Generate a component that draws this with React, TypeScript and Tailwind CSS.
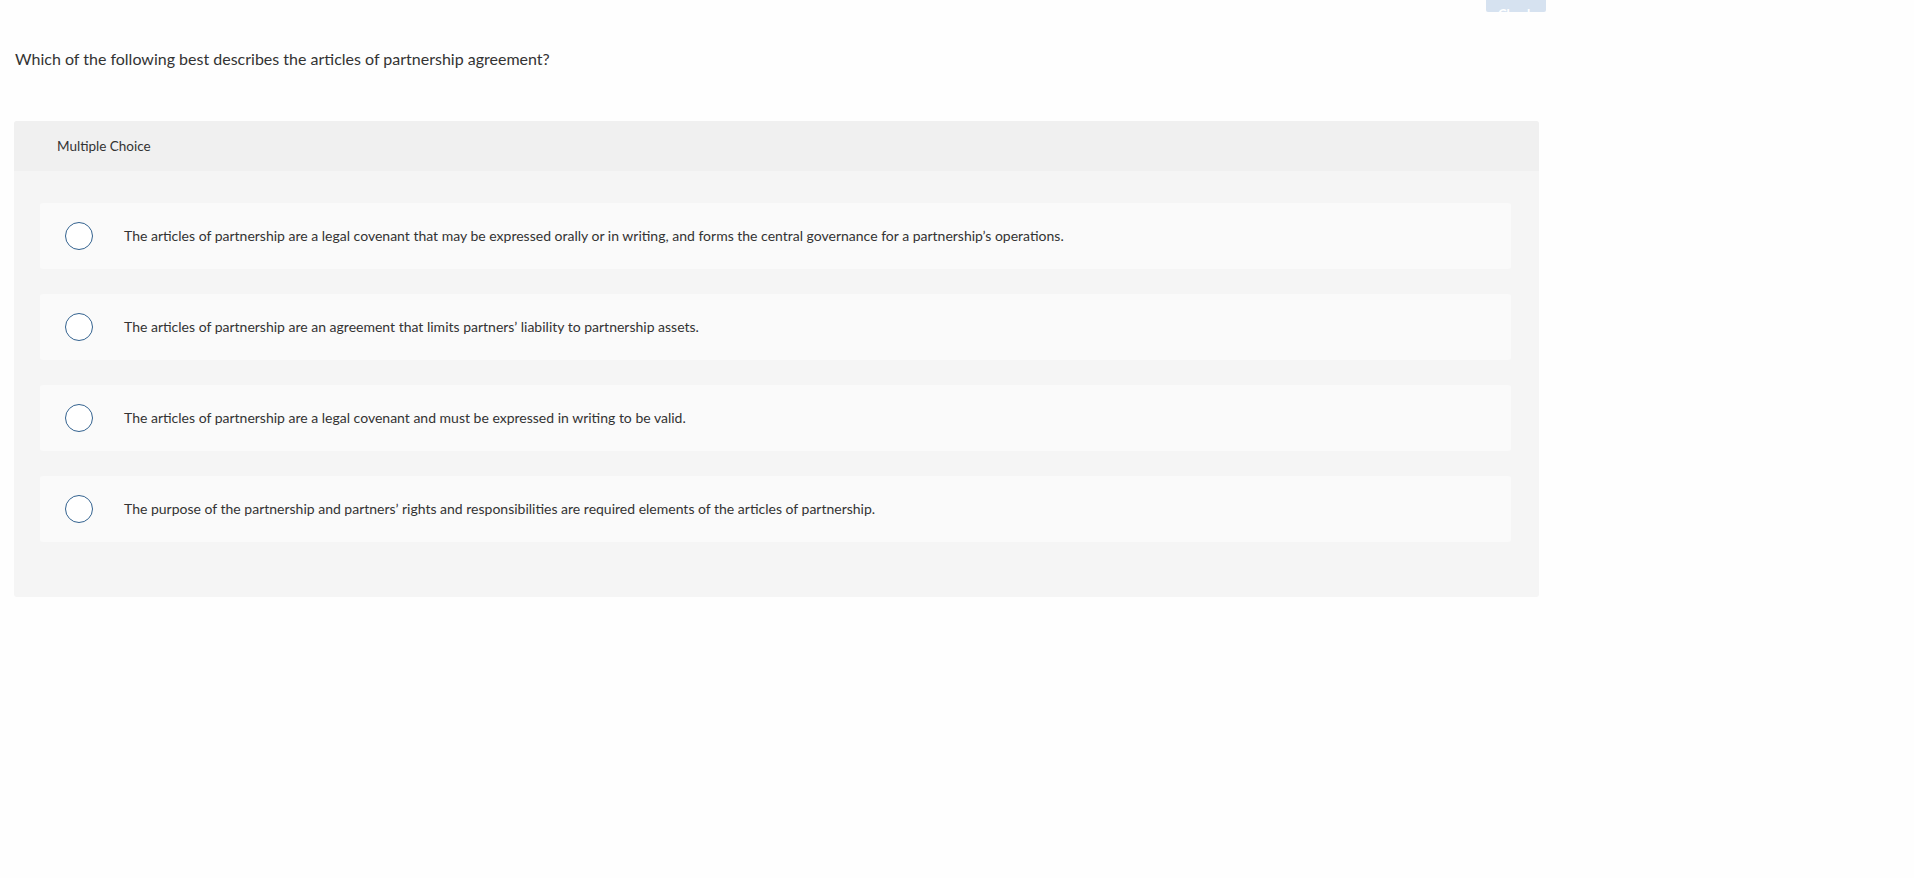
import React from "react";

const options = [
  "The articles of partnership are a legal covenant that may be expressed orally or in writing, and forms the central governance for a partnership\u2019s operations.",
  "The articles of partnership are an agreement that limits partners\u2019 liability to partnership assets.",
  "The articles of partnership are a legal covenant and must be expressed in writing to be valid.",
  "The purpose of the partnership and partners\u2019 rights and responsibilities are required elements of the articles of partnership.",
];

export default function App() {
  return (
    <div className="min-h-[878px] w-full bg-[#fefefe] text-[#333333] font-['Lato','Open_Sans',sans-serif]">
      <div className="flex h-[12px] justify-end pr-[368px]">
        <div className="relative h-[12px] w-[60px] overflow-hidden rounded-b-[2px] bg-[#d6e2f0]">
          <span className="absolute bottom-[-9px] left-0 right-0 text-center text-[13px] leading-[13px] font-bold text-white">
            Check
          </span>
        </div>
      </div>

      <p className="mt-[35px] pl-[15px] text-[16px] leading-[24px]">
        Which of the following best describes the articles of partnership agreement?
      </p>

      <div className="ml-[14px] mt-[50px] w-[1525px] overflow-hidden rounded-[3px] bg-[#f5f5f5]">
        <div className="flex h-[50px] items-center bg-[#f0f0f0] pl-[43px] text-[13.5px]">
          Multiple Choice
        </div>
        <div className="flex flex-col gap-[25px] pb-[55px] pl-[26px] pr-[28px] pt-[32px]">
          {options.map((o, i) => (
            <div
              key={i}
              className="flex h-[66px] items-center rounded-[3px] bg-[#fafafa] pl-[25px]"
            >
              <span className="block h-[28px] w-[28px] shrink-0 rounded-full border-[1.5px] border-[#33628f] bg-white" />
              <span className="ml-[31px] text-[14px] leading-[18px]">{o}</span>
            </div>
          ))}
        </div>
      </div>
    </div>
  );
}
